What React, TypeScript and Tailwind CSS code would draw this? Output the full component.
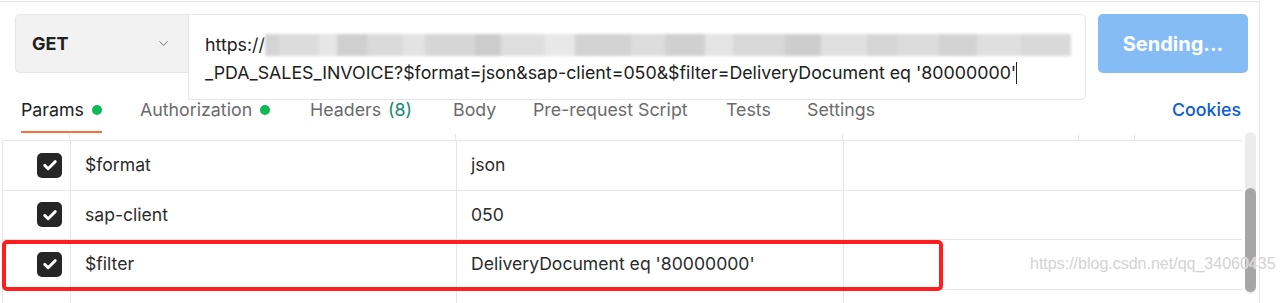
import { ChevronDown } from "lucide-react";

const TABS = [
    { label: "Params", w: "w-[119px]", active: true, dot: true },
    { label: "Authorization", w: "w-[170px]", dot: true },
    { label: "Headers", w: "w-[143px]", count: "(8)" },
    { label: "Body", w: "w-[80px]" },
    { label: "Pre-request Script", w: "w-[193px]" },
    { label: "Tests", w: "w-[81px]" },
    { label: "Settings", w: "w-[120px]" },
];

const ROWS = [
    { key: "$format", value: "json" },
    { key: "sap-client", value: "050" },
    { key: "$filter", value: "DeliveryDocument eq '80000000'" },
];

// pixelated blur over the host part of the url
const BLUR = [
    { w: "w-[14px]", c: "bg-[#d4d4d4]" },
    { w: "w-[40px]", c: "bg-[#dcdcdc]" },
    { w: "w-[18px]", c: "bg-[#e6e6e6]" },
    { w: "w-[30px]", c: "bg-[#cfcfcf]" },
    { w: "w-[36px]", c: "bg-[#dadada]" },
    { w: "w-[22px]", c: "bg-[#e3e3e3]" },
    { w: "w-[50px]", c: "bg-[#d6d6d6]" },
    { w: "w-[26px]", c: "bg-[#cccccc]" },
    { w: "w-[44px]", c: "bg-[#dedede]" },
    { w: "w-[30px]", c: "bg-[#e8e8e8]" },
    { w: "w-[56px]", c: "bg-[#d2d2d2]" },
    { w: "w-[34px]", c: "bg-[#dddddd]" },
    { w: "w-[40px]", c: "bg-[#d0d0d0]" },
    { w: "w-[28px]", c: "bg-[#e4e4e4]" },
    { w: "w-[52px]", c: "bg-[#d8d8d8]" },
    { w: "w-[36px]", c: "bg-[#cdcdcd]" },
    { w: "w-[46px]", c: "bg-[#e0e0e0]" },
    { w: "w-[30px]", c: "bg-[#d5d5d5]" },
    { w: "w-[42px]", c: "bg-[#dbdbdb]" },
    { w: "w-[38px]", c: "bg-[#d3d3d3]" },
    { w: "w-[44px]", c: "bg-[#dfdfdf]" },
    { w: "w-[50px]", c: "bg-[#d9d9d9]" },
];

function Check() {
    return (
        <div className="w-[25px] h-[25px] rounded-[5px] bg-[#262626] flex items-center justify-center">
            <svg className="w-[18px] h-[18px]" viewBox="0 0 24 24" fill="none" stroke="white" strokeWidth={3.8} strokeLinecap="round" strokeLinejoin="round">
                <path d="M5 12.5l4.5 4.5L19 7.5" />
            </svg>
        </div>
    );
}

export default function App() {
    return (
        <div className="relative w-[1282px] h-[303px] bg-white overflow-hidden pt-px font-['Inter','Noto_Sans',sans-serif]">
            <div className="w-[1260px] h-full border-t border-r border-[#e6e6e6]">
                {/* Request bar */}
                <div className="flex items-start pl-[15px] mt-[12px] h-[86px]">
                    <div className="w-[173px] h-[59px] bg-[#f2f2f2] border border-r-0 border-[#e6e6e6] rounded-l-[5px] flex items-center pl-[16px] pr-[17px]">
                        <span className="text-[18px] font-bold text-[#212121] flex-1">GET</span>
                        <ChevronDown className="w-[15px] h-[15px] text-[#6b6b6b]" strokeWidth={1.5} />
                    </div>
                    <div className="w-[898px] h-[86px] border border-[#e6e6e6] rounded-r-[5px] pl-[16px] pt-[16px] text-[17.8px] leading-[28px] text-[#212121]">
                        <div className="flex items-center h-[28px]">
                            <span>https://</span>
                            <div className="relative flex h-[22px] blur-[1.5px]">
                                {BLUR.map((b, i) => (
                                    <div key={i} className={`${b.w} ${b.c} h-full`} />
                                ))}
                            </div>
                        </div>
                        <div className="flex items-center h-[28px]">
                            <span>_PDA_SALES_INVOICE?$format=json&amp;sap-client=050&amp;$filter=DeliveryDocument eq '80000000'</span>
                            <span className="w-px h-[22px] bg-[#212121]" />
                        </div>
                    </div>
                    <button className="ml-[12px] w-[150px] h-[59px] rounded-[5px] bg-[#85bcf5] text-white text-[20px] font-bold">
                        Sending...
                    </button>
                </div>

                {/* Tabs */}
                <div className="flex items-start h-[34px] pl-[21px] pr-[18px]">
                    {TABS.map(t => (
                        <div key={t.label} className={`${t.w} flex flex-col items-start`}>
                            <div className="flex flex-col">
                                <div className={`flex items-center h-[20px] text-[17.8px] ${t.active ? "text-[#212121]" : "text-[#6b6b6b]"}`}>
                                    <span>{t.label}</span>
                                    {t.count && <span className="ml-[7px] text-[#0f8a6e]">{t.count}</span>}
                                    {t.dot && <span className="ml-[8px] w-[10px] h-[10px] rounded-full bg-[#0cbb52]" />}
                                </div>
                                {t.active && <div className="mt-[11px] h-[2px] bg-[#ff6c37]" />}
                            </div>
                        </div>
                    ))}
                    <div className="flex-1" />
                    <span className="h-[20px] flex items-center text-[17.8px] font-medium text-[#0b5cd5]">Cookies</span>
                </div>

                {/* Params table */}
                <div className="flex pl-[2px]">
                    <div className="w-[1240px]">
                        <div className="flex h-[6px]">
                            <div className="w-[68px] border-r border-[#e6e6e6]" />
                            <div className="w-[386px] border-r border-[#e6e6e6]" />
                            <div className="w-[387px] border-r border-[#e6e6e6]" />
                            <div className="w-[236px] border-r border-[#e6e6e6]" />
                            <div className="w-[56px] border-r border-[#e6e6e6]" />
                        </div>
                        <div className="border-t border-l border-[#e6e6e6]">
                            {ROWS.map(r => (
                                <div key={r.key} className="flex h-[49.5px] border-b border-[#e6e6e6] text-[17.6px] text-[#2b2b2b]">
                                    <div className="w-[68px] border-r border-[#e6e6e6] flex items-center justify-end pr-[8px]">
                                        <Check />
                                    </div>
                                    <div className="w-[386px] border-r border-[#e6e6e6] flex items-center pl-[14px]">{r.key}</div>
                                    <div className="w-[387px] border-r border-[#e6e6e6] flex items-center pl-[14px]">{r.value}</div>
                                    <div className="flex-1" />
                                </div>
                            ))}
                            <div className="flex h-[20px]">
                                <div className="w-[68px] border-r border-[#e6e6e6]" />
                                <div className="w-[386px] border-r border-[#e6e6e6]" />
                                <div className="w-[387px] border-r border-[#e6e6e6]" />
                            </div>
                        </div>
                    </div>
                    {/* Scrollbar */}
                    <div className="ml-[3px] -mt-[2px] w-[11px] h-[162px] rounded-full bg-[#ececec] flex flex-col">
                        <div className="mt-[56px] h-[104px] rounded-full bg-[#a6a6a6]" />
                    </div>
                </div>
            </div>

            {/* Annotation */}
            <div className="absolute left-[2px] top-[240px] w-[941px] h-[51px] border-[4px] border-[#ff1d1d] rounded-[5px]" />

            {/* Watermark */}
            <span className="absolute left-[1030px] top-[252px] text-[16px] text-[#d3d3d3] font-['Liberation_Sans',Arial,sans-serif] [text-shadow:0_0_1px_#ffffff]">
                https://blog.csdn.net/qq_34060435
            </span>
        </div>
    );
}
